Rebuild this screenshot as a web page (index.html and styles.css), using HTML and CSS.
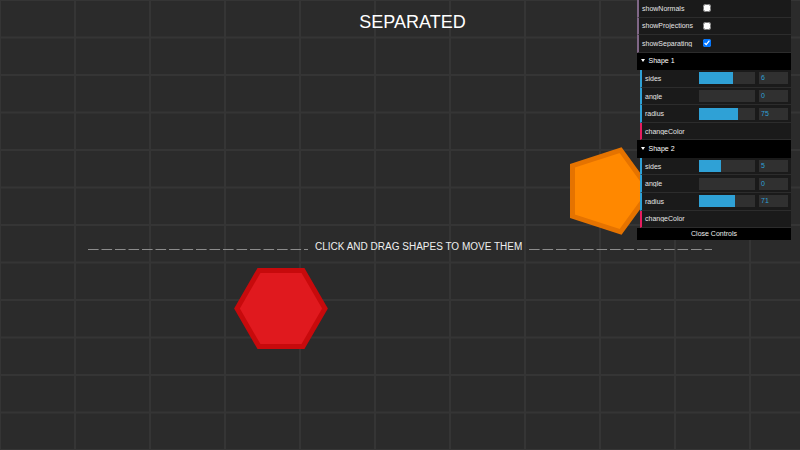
FILE: index.html
```html
<!DOCTYPE html>
<html>
<head>
<meta charset="utf-8">
<link rel="stylesheet" href="styles.css">
</head>
<body>
<div class="stage">
  <svg class="canvas" width="800" height="450" viewBox="0 0 800 450">
    <polygon class="hex" points="325,308.5 303,346.6 259,346.6 237,308.5 259,270.4 303,270.4"/>
    <polygon class="pent" points="650.3,191 620.6,231.9 572.5,216.3 572.5,165.7 620.6,150.1"/>
  </svg>
  <h1 class="title">SEPARATED</h1>
  <div class="hint">
    <span class="dash dash-left"></span>
    <span class="hint-text">CLICK AND DRAG SHAPES TO MOVE THEM</span>
    <span class="dash dash-right"></span>
  </div>

  <div class="gui">
    <div class="row bool"><span class="name">showNormals</span><span class="c"><input type="checkbox" class="cb"></span></div>
    <div class="row bool"><span class="name">showProjections</span><span class="c"><input type="checkbox" class="cb"></span></div>
    <div class="row bool"><span class="name">showSeparating</span><span class="c"><input type="checkbox" class="cb" checked></span></div>

    <div class="folder-title"><span class="arrow"></span>Shape 1</div>
    <div class="folder">
      <div class="row num"><span class="name">sides</span><span class="c"><span class="slider"><span class="fg" style="width:60%"></span></span><span class="val">6</span></span></div>
      <div class="row num"><span class="name">angle</span><span class="c"><span class="slider"><span class="fg" style="width:0%"></span></span><span class="val">0</span></span></div>
      <div class="row num"><span class="name">radius</span><span class="c"><span class="slider"><span class="fg" style="width:70%"></span></span><span class="val">75</span></span></div>
      <div class="row fn"><span class="name">changeColor</span></div>
    </div>

    <div class="folder-title"><span class="arrow"></span>Shape 2</div>
    <div class="folder">
      <div class="row num"><span class="name">sides</span><span class="c"><span class="slider"><span class="fg" style="width:40%"></span></span><span class="val">5</span></span></div>
      <div class="row num"><span class="name">angle</span><span class="c"><span class="slider"><span class="fg" style="width:0%"></span></span><span class="val">0</span></span></div>
      <div class="row num"><span class="name">radius</span><span class="c"><span class="slider"><span class="fg" style="width:64%"></span></span><span class="val">71</span></span></div>
      <div class="row fn"><span class="name">changeColor</span></div>
    </div>

    <div class="close">Close Controls</div>
  </div>
</div>
</body>
</html>
```

FILE: styles.css
```css
html, body {
  margin: 0;
  padding: 0;
  background: #2b2b2b;
}

.stage {
  position: relative;
  width: 800px;
  height: 450px;
  overflow: hidden;
  background-color: #2b2b2b;
  background-image:
    linear-gradient(to right, #353535 0, #353535 2px, transparent 2px),
    linear-gradient(to bottom, #353535 0, #353535 2px, transparent 2px);
  background-size: 75px 450px, 800px 37.5px;
  background-position: 74px 0, 0 36.5px;
  font-family: "Liberation Sans", Arial, sans-serif;
  display: flex;
  flex-direction: column;
}

.canvas {
  position: absolute;
  left: 0;
  top: 0;
}

.hex {
  fill: #e0191e;
  stroke: #c70a0c;
  stroke-width: 5;
  stroke-linejoin: miter;
}

.pent {
  fill: #ff8800;
  stroke: #e57300;
  stroke-width: 5;
  stroke-linejoin: miter;
}

.title {
  position: relative;
  margin: 12px 0 0 25px;
  font-size: 18px;
  line-height: 20px;
  font-weight: normal;
  color: #ffffff;
  text-align: center;
}

.hint {
  position: relative;
  display: flex;
  align-items: flex-start;
  margin: 207px 0 0 88px;
  width: 624px;
  height: 16px;
}

.dash {
  height: 1px;
  margin-top: 9.5px;
  background-image: linear-gradient(to right, #8c8c8c 0, #8c8c8c 11px, transparent 11px);
  background-size: 13.5px 1px;
  background-repeat: repeat-x;
}

.dash-left {
  width: 220px;
}

.dash-right {
  flex: 1;
}

.hint-text {
  padding: 0 7px;
  font-size: 10px;
  line-height: 16px;
  color: #eeeeee;
  white-space: nowrap;
}

/* dat.gui style panel */
.gui {
  position: absolute;
  top: 0;
  left: 637px;
  width: 154px;
  font-size: 7px;
  color: #e6e6e6;
}

.row {
  box-sizing: border-box;
  height: 17.55px;
  display: flex;
  align-items: center;
  background: #1a1a1a;
  border-bottom: 1px solid #2c2c2c;
  border-left: 2px solid #806787;
}

.row.num {
  border-left-color: #2fa1d6;
}

.row.fn {
  border-left-color: #e61d5f;
}

.folder {
  margin-left: 2.6px;
}

.name {
  flex: 1;
  padding-left: 3px;
  white-space: nowrap;
  overflow: hidden;
}

.folder .name {
  padding-left: 3.4px;
}

.c {
  width: 92px;
  display: flex;
  align-items: center;
}

.cb {
  width: 8px;
  height: 8px;
  margin: 0 0 0 4px;
}

.slider {
  position: relative;
  width: 56px;
  height: 12px;
  background: #303030;
}

.fg {
  display: block;
  height: 100%;
  background: #2fa1d6;
}

.val {
  box-sizing: border-box;
  width: 29px;
  height: 12px;
  margin-left: 4px;
  padding-left: 2px;
  background: #303030;
  color: #2fa1d6;
  line-height: 12px;
  font-size: 7px;
}

.folder-title {
  box-sizing: border-box;
  height: 17.55px;
  display: flex;
  align-items: center;
  background: #000000;
  border-bottom: 1px solid rgba(0, 0, 0, 0.2);
  padding-left: 4px;
  color: #ffffff;
}

.arrow {
  width: 0;
  height: 0;
  border-left: 2px solid transparent;
  border-right: 2px solid transparent;
  border-top: 3px solid #ffffff;
  margin-right: 3.5px;
}

.close {
  height: 12px;
  line-height: 12px;
  background: #000000;
  text-align: center;
  color: #eeeeee;
}
```
